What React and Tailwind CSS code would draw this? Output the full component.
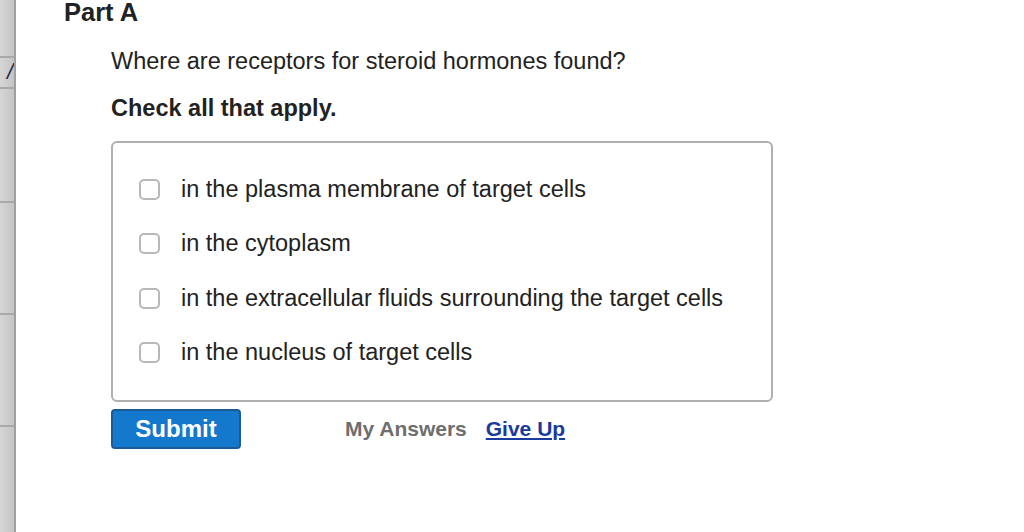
import React from 'react';

const options = [
  'in the plasma membrane of target cells',
  'in the cytoplasm',
  'in the extracellular fluids surrounding the target cells',
  'in the nucleus of target cells',
];

const Sidebar = () => (
  <div className="w-[16px] shrink-0 bg-gradient-to-r from-[#d6d6d6] to-[#c4c4c4] border-r-2 border-[#a0a0a0] flex flex-col">
    <div className="h-[58px] border-b-2 border-[#a8a8a8]"></div>
    <div className="h-[31px] border-b-2 border-[#a8a8a8] overflow-hidden relative">
      <span className="absolute right-[1px] top-[3px] text-[22px] leading-none text-[#1e2a44] italic">/</span>
    </div>
    <div className="h-[114px] border-b-2 border-[#a8a8a8]"></div>
    <div className="h-[112px] border-b-2 border-[#a8a8a8]"></div>
    <div className="h-[112px] border-b-2 border-[#a8a8a8]"></div>
    <div className="flex-1"></div>
  </div>
);

const App = () => {
  return (
    <div className="w-[1024px] h-[532px] bg-white flex overflow-hidden" style={{ fontFamily: '"Liberation Sans", Arial, sans-serif' }}>
      <Sidebar />
      <div className="flex-1 pl-[48px]">
        <h2 className="text-[25.5px] font-bold text-[#222] leading-[24px]">Part A</h2>
        <div className="pl-[47px]">
          <p className="mt-[23px] text-[23.5px] text-[#222] leading-[28px]">Where are receptors for steroid hormones found?</p>
          <p className="mt-[19px] text-[23.5px] font-bold text-[#222] leading-[28px]">Check all that apply.</p>

          <div className="mt-[19px] w-[662px] h-[261px] border-2 border-[#b0b0b0] rounded-[6px] pt-[19px] pl-[26px]">
            {options.map((opt) => (
              <label key={opt} className="flex items-center h-[54.5px] cursor-pointer">
                <span className="w-[21px] h-[21px] rounded-[5px] border-2 border-[#b8b8b8] bg-white shrink-0"></span>
                <span className="ml-[21px] text-[23.5px] text-[#222] leading-none">{opt}</span>
              </label>
            ))}
          </div>

          <div className="mt-[7px] flex items-center">
            <button className="w-[130px] h-[40px] bg-[#1478cc] border-2 border-[#1b5a94] rounded-[4px] text-white text-[24px] font-bold leading-none">
              Submit
            </button>
            <span className="ml-[104px] text-[21px] font-bold text-[#6e6e6e]">My Answers</span>
            <a href="#" className="ml-[19px] text-[21px] font-bold text-[#1a3a9e] underline">Give Up</a>
          </div>
        </div>
      </div>
    </div>
  );
};

export default App;
